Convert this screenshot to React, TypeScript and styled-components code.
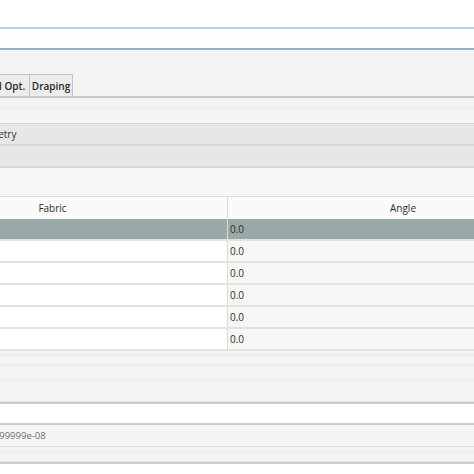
import styled, { createGlobalStyle } from 'styled-components'

const GlobalStyle = createGlobalStyle`
  html, body {
    margin: 0;
    padding: 0;
    background: #ffffff;
    overflow: hidden;
  }
  body {
    font-family: "Open Sans", "DejaVu Sans", sans-serif;
    color: #2b2b2b;
  }
`

const Viewport = styled.div`
  width: 474px;
  height: 474px;
  overflow: hidden;
  background: #ffffff;
`

const Window = styled.div`
  width: 700px;
  margin-left: -122px;
  display: flex;
  flex-direction: column;
`

const TopBlank = styled.div`
  height: 27px;
  background: #ffffff;
`

const AddressBar = styled.div`
  height: 19px;
  border-top: 2px solid #aad9ec;
  border-bottom: 2px solid #8fb0cf;
  background: #fdfeff;
`

const TabArea = styled.div`
  height: 27px;
  padding-top: 19px;
  padding-left: 30px;
  display: flex;
  align-items: flex-end;
  background: #f3f3f3;
  border-bottom: 2px solid #c7c7c7;
`

const Tab = styled.div<{ $w: number }>`
  width: ${(p) => p.$w}px;
  height: 22px;
  margin-right: -1px;
  display: flex;
  align-items: center;
  justify-content: center;
  box-sizing: border-box;
  border: 1px solid #c2c2c2;
  border-bottom: none;
  background: #ececec;
  font-size: 10px;
  font-weight: 600;
  color: #2a2a2a;
`

const Strip = styled.div`
  height: 9px;
  background: #f4f4f4;
  border-bottom: 1px solid #e9e9e9;
`

const StripTall = styled(Strip)`
  height: 15px;
  border-bottom: 1px solid #d3d6d6;
`

const GroupRow = styled.div`
  height: 20px;
  padding-left: 92px;
  display: flex;
  align-items: center;
  background: #e6e8e8;
  border-bottom: 2px solid #d3d6d6;
  font-size: 10px;
  color: #333;
`

const Gap = styled.div`
  height: 28px;
  background: #f6f6f6;
  border-bottom: 1px solid #dcdcdc;
`

const Table = styled.div`
  display: flex;
  flex-direction: column;
`

const Row = styled.div<{ $selected?: boolean; $header?: boolean }>`
  display: grid;
  grid-template-columns: 350px 1fr;
  height: ${(p) => (p.$header ? 22 : 20)}px;
  border-bottom: ${(p) => (p.$header ? '0' : '2px solid #e4e4d8')};
  background: ${(p) => (p.$selected ? '#9aa9a7' : 'transparent')};
  font-size: 10px;
`

const Cell = styled.div<{ $center?: boolean; $tint?: string }>`
  display: flex;
  align-items: center;
  justify-content: ${(p) => (p.$center ? 'center' : 'flex-start')};
  padding-left: ${(p) => (p.$center ? 0 : 2)}px;
  background: ${(p) => p.$tint ?? 'transparent'};
  border-right: 1px solid #d9dad0;
  color: #2c2c2c;

  &:last-child {
    border-right: none;
  }
`

const Band = styled.div<{ $h: number; $line?: string }>`
  height: ${(p) => p.$h}px;
  background: #f4f4f4;
  border-bottom: 1px solid ${(p) => p.$line ?? '#e8e8e8'};
`

const HeavyLine = styled.div`
  height: 2px;
  background: #c6cdcd;
`

const WhiteGap = styled.div`
  height: 19px;
  background: #ffffff;
`

const Field = styled.div`
  height: 21px;
  padding-left: 97px;
  display: flex;
  align-items: center;
  background: #f4f5f5;
  border-bottom: 1px solid #e2e4e4;
  font-size: 9.5px;
  color: #6d6d6d;
`

const rows = [0, 1, 2, 3, 4, 5]

const App = () => (
  <Viewport>
    <GlobalStyle />
    <Window>
      <TopBlank />
      <AddressBar />
      <TabArea>
        <Tab $w={60}>Geometry</Tab>
        <Tab $w={63}>Model Opt.</Tab>
        <Tab $w={44}>Draping</Tab>
      </TabArea>
      <Strip />
      <StripTall />
      <GroupRow>Geometry</GroupRow>
      <GroupRow />
      <Gap />
      <Table>
        <Row $header>
          <Cell $center $tint="#fafafa">Fabric</Cell>
          <Cell $center $tint="#fafafa">Angle</Cell>
        </Row>
        {rows.map((i) => (
          <Row key={i} $selected={i === 0}>
            <Cell $tint={i === 0 ? undefined : '#ffffff'} />
            <Cell $tint={i === 0 ? undefined : '#f6f6f6'}>0.0</Cell>
          </Row>
        ))}
      </Table>
      <Band $h={3} />
      <Band $h={10} />
      <Band $h={14} />
      <Band $h={20} />
      <HeavyLine />
      <WhiteGap />
      <HeavyLine />
      <Field>1.99999999e-08</Field>
      <Band $h={4} />
      <Band $h={9} />
      <HeavyLine />
    </Window>
  </Viewport>
)

export default App
